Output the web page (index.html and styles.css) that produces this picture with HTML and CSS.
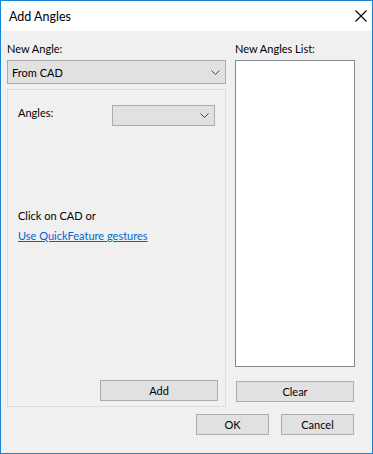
FILE: index.html
```html
<!DOCTYPE html>
<html lang="en">
<head>
    <meta charset="UTF-8">
    <title>Add Angles</title>
    <link rel="stylesheet" href="styles.css">
</head>
<body>
    <div class="window">
        <div class="titlebar">
            <span class="title">Add Angles</span>
            <svg class="close" width="12" height="12" viewBox="0 0 12 12">
                <path d="M0.5 0.5 L11.5 11.5 M11.5 0.5 L0.5 11.5" stroke="#000" stroke-width="1.1" fill="none"/>
            </svg>
        </div>

        <div class="content">
            <div class="columns">
                <div class="left-col">
                    <div class="label">New Angle:</div>
                    <div class="select">
                        <span>From CAD</span>
                        <svg class="chev" width="9" height="5" viewBox="0 0 9 5"><path d="M0.5 0.5 L4.5 4.5 L8.5 0.5" stroke="#444" fill="none"/></svg>
                    </div>
                    <div class="panel">
                        <div class="angles-row">
                            <span>Angles:</span>
                            <div class="combo">
                                <svg class="chev" width="9" height="5" viewBox="0 0 9 5"><path d="M0.5 0.5 L4.5 4.5 L8.5 0.5" stroke="#444" fill="none"/></svg>
                            </div>
                        </div>
                        <div class="hint">
                            <div>Click on CAD or</div>
                            <a href="#" class="link">Use QuickFeature gestures</a>
                        </div>
                        <div class="panel-foot">
                            <button class="btn btn-add">Add</button>
                        </div>
                    </div>
                </div>
                <div class="right-col">
                    <div class="label">New Angles List:</div>
                    <div class="listbox"></div>
                    <button class="btn btn-clear">Clear</button>
                </div>
            </div>
            <div class="footer">
                <button class="btn btn-ok">OK</button>
                <button class="btn btn-ok">Cancel</button>
            </div>
        </div>
    </div>
</body>
</html>
```

FILE: styles.css
```css
* {
    box-sizing: border-box;
}
body {
    margin: 0;
    font-family: Lato, "Noto Sans", sans-serif;
    font-size: 11px;
    color: #000;
}
.window {
    width: 373px;
    height: 454px;
    border: 1px solid #1883d7;
    background: #f0f0f0;
    display: flex;
    flex-direction: column;
}
.titlebar {
    height: 30px;
    background: #fff;
    display: flex;
    align-items: center;
    justify-content: space-between;
    padding: 0 5px 0 8px;
}
.title {
    font-size: 12.5px;
}
.content {
    padding: 10px 17px 0 6px;
}
.columns {
    display: flex;
    gap: 9px;
}
.left-col {
    width: 219px;
    display: flex;
    flex-direction: column;
}
.right-col {
    width: 120px;
    display: flex;
    flex-direction: column;
}
.label {
    height: 15px;
    line-height: 15px;
    margin-bottom: 4px;
}
.select {
    height: 24px;
    background: #e1e1e1;
    border: 1px solid #adadad;
    display: flex;
    align-items: center;
    justify-content: space-between;
    padding: 0 5px 0 4px;
}
.chev {
    display: block;
}
.panel {
    margin-top: 5px;
    height: 318px;
    border: 1px solid #dcdcdc;
    display: flex;
    flex-direction: column;
    padding: 15px 10px 5px 10px;
}
.angles-row {
    display: flex;
    align-items: flex-start;
    justify-content: space-between;
}
.angles-row span {
    line-height: 16px;
}
.combo {
    width: 103px;
    height: 21px;
    background: #e1e1e1;
    border: 1px solid #adadad;
    display: flex;
    align-items: center;
    justify-content: flex-end;
    padding-right: 5px;
}
.hint {
    margin-top: 80px;
    line-height: 20px;
}
.link {
    color: #0066cc;
    text-decoration: underline;
}
.panel-foot {
    margin-top: auto;
    display: flex;
    justify-content: flex-end;
    margin-right: -3px;
}
.btn {
    font-family: inherit;
    font-size: 11px;
    height: 21px;
    background: #e1e1e1;
    border: 1px solid #adadad;
    padding: 0;
    color: #000;
}
.btn-add {
    width: 118px;
}
.listbox {
    height: 307px;
    background: #fff;
    border: 1px solid #828790;
}
.btn-clear {
    margin-top: 14px;
    width: 118px;
    margin-left: 1px;
}
.footer {
    margin-top: 7px;
    display: flex;
    justify-content: flex-end;
    gap: 12px;
    padding-right: 1px;
}
.btn-ok {
    width: 73px;
}
```
